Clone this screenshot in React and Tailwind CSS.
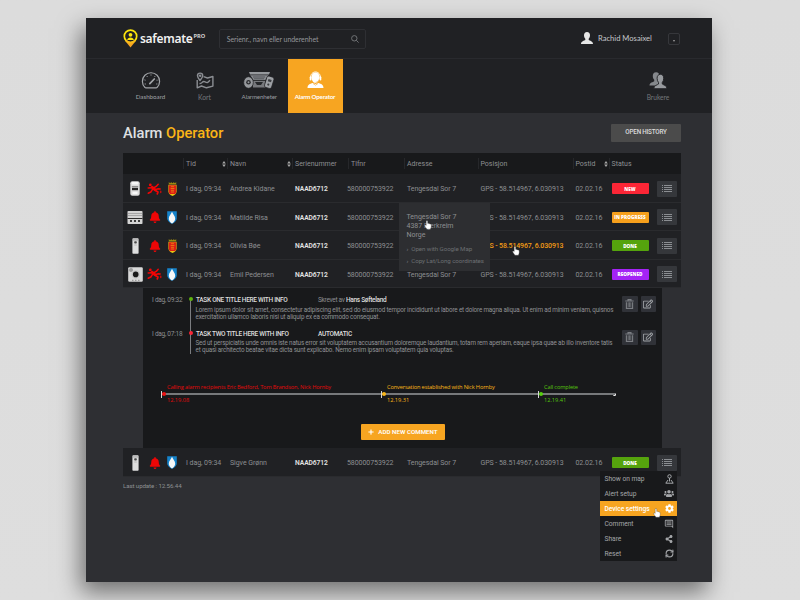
import React from "react";
import { FaBell, FaPlus, FaRegEdit, FaCog, FaShareAlt, FaUsers } from "react-icons/fa";
import { MdOutlineComment } from "react-icons/md";
import { RefreshCw } from "lucide-react";

const GRID =
  "grid grid-cols-[63px_44px_65px_52px_60px_73.5px_95px_36px_45.5px_24px] items-center";

const rows = [
  { device: "tracker", alarm: "fall", shield: "red", name: "Andrea Kidane", status: "NEW", color: "bg-[#fb2636]" },
  { device: "base", alarm: "bell", shield: "blue", name: "Matilde Risa", status: "IN PROGRESS", color: "bg-[#f7a01c]", covered: true },
  { device: "remote", alarm: "bell", shield: "red", name: "Olivia Bøe", status: "DONE", color: "bg-[#55a30d]", hot: true, covered: true },
  { device: "camera", alarm: "fall", shield: "blue", name: "Emil Pedersen", status: "REOPENED", color: "bg-[#a423f5]" },
];

const lastRow = { device: "remote", alarm: "bell", shield: "blue", name: "Sigve Grønn", status: "DONE", color: "bg-[#55a30d]" };

const Logo = () => (
  <div className="flex h-5 items-center">
    <svg width="15" height="19" viewBox="0 0 15 19">
      <path d="M7.5 18.6 2.700 12.500h9.600z" fill="#f7a521" />
      <circle cx="7.5" cy="7.3" r="6.2" fill="#202124" stroke="#fbe40c" strokeWidth="1.7" />
      <path d="M2.7 11.4a6.2 6.2 0 0 0 9.6 0" fill="none" stroke="#f9b91a" strokeWidth="1.7" />
      <circle cx="7.5" cy="5.8" r="1.9" fill="#fbe40c" />
      <path d="M4.2 11c0-3.400 6.600-3.400 6.600 0z" fill="#fbe40c" />
    </svg>
    <span className="mt-[2px] ml-[2px] font-['Noto_Sans'] text-[12px] leading-none font-semibold tracking-[-0.3px] text-[#f1f1f1]">
      safemate
    </span>
    <span className="mb-[3px] ml-[1px] font-['Noto_Sans'] text-[5.700px] leading-none font-bold text-[#d0d0d0]">PRO</span>
  </div>
);

const GaugeIcon = () => (
  <svg width="20" height="18" viewBox="0 0 20 18" fill="none" stroke="#a1a4a8" strokeLinecap="round">
    <path d="M4 16.500a8.600 8.600 0 1 1 12 0q-.3.4-.9.400H4.900q-.6 0-.9-.4z" strokeWidth="1.200" />
    <path d="M8.800 12.700 13.300 8" strokeWidth="1.700" />
    <path d="M10 3.800v.4M6 5.300l.3.400M14 5.300l-.2.300M3.800 9l.4.100M16.200 9.200h-.3M4 13h.5M15.600 13h.4" strokeWidth=".9" />
  </svg>
);

const MapIcon = () => (
  <svg width="18" height="17" viewBox="0 0 18 17" fill="none" stroke="#8b8e93" strokeWidth="1.400" strokeLinejoin="round">
    <path d="M4 8.500C2.200 6.200 1.500 5 1.500 3.700a2.600 2.600 0 0 1 5.200 0C6.700 5 5.800 6.200 4 8.500z" />
    <circle cx="4.100" cy="3.700" r=".6" />
    <path d="M1.200 8v7.800L5.500 14l5 1.800 6.400-1.700V4.500L11.500 6 7.600 4.700" />
    <path d="M3.500 11.500c3 .5 2.500-2.800 5-1.800s2.200 2 5.500-1.500" />
  </svg>
);

const DevicesIcon = () => (
  <svg width="32" height="18" viewBox="0 0 32 18">
    <path d="M6 1h21l-1 2.500H7z" fill="#96999d" />
    <path d="M7.200 4.200h18.200L22.500 9h-12z" fill="#84878b" />
    <path d="M10 6h12M11 7.800h10" stroke="#36383c" strokeWidth=".6" />
    <path d="M10 9.800h12v6.700H10z" fill="#77797d" />
    <path d="M12 11h8l-2 3h-4z" fill="#26282b" />
    <ellipse cx="5.500" cy="11.500" rx="4.800" ry="5.800" fill="#96999d" stroke="#202124" strokeWidth=".7" />
    <circle cx="5.500" cy="11.200" r="2.300" fill="#2a2b2e" />
    <circle cx="5.500" cy="11.200" r="1" fill="#96999d" />
    <rect x="22.600" y="5.300" width="7.400" height="11.800" rx="2" transform="rotate(17 26 11)" fill="#9da0a4" stroke="#202124" strokeWidth=".7" />
    <path d="m25.500 8 3.200 1-.7 2.300-3.200-1z" fill="#3a3c40" />
    <circle cx="25.300" cy="13.600" r="1.100" fill="#3a3c40" />
  </svg>
);

const OperatorIcon = () => (
  <svg width="17" height="18" viewBox="0 0 17 18">
    <path d="M3.600 7.500C2.900-1.200 14.100-1.200 13.400 7.500" fill="none" stroke="#fff" strokeWidth="1" />
    <path d="M4.500 5.800c0-5.800 8-5.800 8 0 0 3.200-1.300 6.200-4 6.200s-4-3-4-6.200z" fill="#fff" />
    <rect x="2.700" y="5.500" width="1.800" height="4" rx=".8" fill="#fff" />
    <rect x="12.500" y="5.500" width="1.800" height="4" rx=".8" fill="#fff" />
    <path d="M.5 17c0-3.600 3-4.200 5.300-4.900l2.700 1 2.700-1c2.300.7 5.300 1.300 5.300 4.900z" fill="#fff" />
    <path d="M12 8.500c-.3 2-1.400 2.700-3.400 2.800M6 12.500l2.500 1.700 2.500-1.700" fill="none" stroke="#f7a521" strokeWidth=".6" />
  </svg>
);

const PERSON = "M6 0c2 0 3 1.400 3 3.300 0 1.500-.5 2.700-1.300 3.500v1.300c1 .9 4.300 1 4.300 3.900H0c0-2.900 3.300-3 4.300-3.900V6.800C3.500 6 3 4.800 3 3.300 3 1.400 4 0 6 0z";

const PersonIcon = () => (
  <svg width="12" height="12" viewBox="0 0 12 12">
    <path d={PERSON} fill="#e6e6e6" />
  </svg>
);

const UsersIcon = () => (
  <svg width="18" height="17" viewBox="0 0 18 17">
    <path d={PERSON} transform="translate(.5 .3) scale(1.100)" fill="#85888c" />
    <path d={PERSON} transform="translate(4.800 2.300) scale(1.100 1.200)" fill="#979a9e" stroke="#202124" strokeWidth=".8" />
  </svg>
);

const DeviceIcon = ({ type }) => {
  if (type === "tracker")
    return (
      <svg width="10" height="15" viewBox="0 0 10 15">
        <rect x=".3" y=".3" width="9.400" height="14.400" rx="2" fill="#dcdcdc" />
        <rect x="1.800" y="1" width="6.400" height="2.500" rx="1" fill="#f6f6f6" />
        <path d="M1.800 5h6.400v1.200H1.800z" fill="#8d8d8d" />
        <path d="M2 6.800h6v2.400H2z" fill="#242424" />
        <path d="M2.500 10.700h5v2.500h-5z" fill="#f8f8f8" />
      </svg>
    );
  if (type === "base")
    return (
      <svg width="16" height="13" viewBox="0 0 16 13">
        <rect x=".5" y="0" width="15" height="13" rx=".8" fill="#d3d3d3" />
        <path d="M1 2.500h14M1 4.500h14" stroke="#9a9a9a" strokeWidth=".8" />
        <path d="M.5 7.500h15" stroke="#2b2b2b" strokeWidth="1" />
        <path d="M3 9h2v2H3zM7 9h2v2H7zM11 9h2v2h-2z" fill="#3c3c3c" />
      </svg>
    );
  if (type === "remote")
    return (
      <svg width="7" height="16" viewBox="0 0 7 16">
        <rect x=".4" y=".3" width="6.200" height="15.400" rx=".8" fill="#dedede" />
        <rect x="1" y="1" width="5" height="1.800" fill="#bbb" />
        <rect x="2.200" y="3.300" width="2.600" height="2.300" rx=".8" fill="#4a4a4a" />
        <path d="M2.200 7h2.600" stroke="#aaa" strokeWidth=".7" />
      </svg>
    );
  return (
    <svg width="15" height="15" viewBox="0 0 15 15">
      <rect x=".2" y=".2" width="14.600" height="14.600" rx="1.200" fill="#d9d9d9" />
      <circle cx="3" cy="3" r="2" fill="#9c9c9c" />
      <circle cx="7.700" cy="7.400" r="4.300" fill="#cacaca" />
      <circle cx="7.700" cy="7.400" r="2.800" fill="#1a1a1a" />
      <path d="M4 13.300h1.500M7 13.300h1.500M10 13.300h1.500" stroke="#777" strokeWidth=".8" />
    </svg>
  );
};

const FallIcon = () => (
  <svg width="15" height="12" viewBox="0 0 15 12" fill="none" stroke="#f30505" strokeLinecap="round" strokeLinejoin="round">
    <circle cx="3.300" cy="1.900" r="1.400" fill="#f30505" stroke="none" />
    <path d="M5.200 4.300 8 6.800" strokeWidth="2.800" />
    <path d="M5 4.800 1.200 5M6.500 5 9.200 3.400l2-2.200M5.500 6.300 3.800 9 1.200 10.200" strokeWidth="1.500" />
    <path d="m8 6.800 3.300-1 1.800.2M8 7.200l3 1.700-.7 2" strokeWidth="1.700" />
    <path d="M13.800 8v1.600" strokeWidth="1.100" />
  </svg>
);

const Shield = ({ type }) =>
  type === "red" ? (
    <svg width="9" height="14" viewBox="0 0 9 14">
      <path d="M.8 0 2 1.300 3.300.2l1.200 1.100L5.700.2 7 1.300 8.200 0v2.300H.8z" fill="#a08c10" />
      <path d="M.4 2.800h8.200v6.500c0 2.700-2 3.900-4.100 4.600C2.400 13.200.4 12 .4 9.300z" fill="#e8c412" />
      <path d="M.8 3.200h7.400v6.500c0 1-.4 1.800-1.300 2.300H2.100C1.200 11.500.8 10.700.8 9.700z" fill="#de1f14" />
      <path d="M3 4.700h3M2.700 6.500h3.700M3 8.300h3M3 10h3" stroke="#f5a712" strokeWidth=".6" />
    </svg>
  ) : (
    <svg width="10" height="13" viewBox="0 0 10 13">
      <path d="M.2.200h9.600v6.500C9.800 10 7.500 11.600 5 12.800 2.500 11.600.2 10 .2 6.700z" fill="#1583cb" />
      <path d="M5 .8C6 3.300 8.200 5.200 8.200 7.700 8.200 9.500 7 11.300 5 12.500 3 11.300 1.800 9.500 1.800 7.700 1.800 5.200 4 3.300 5 .8z" fill="#f7f7f7" />
    </svg>
  );

const ListIcon = () => (
  <svg width="10" height="7" viewBox="0 0 10 7" fill="#8b8e92" shapeRendering="crispEdges">
    <path d="M0 0h1v1H0zM0 2h1v1H0zM0 4h1v1H0zM0 6h1v1H0zM2 0h8v1H2zM2 2h8v1H2zM2 4h8v1H2zM2 6h8v1H2z" />
  </svg>
);

const TrashIcon = () => (
  <svg width="9" height="10" viewBox="0 0 9 10" fill="none" stroke="#7b7e83">
    <path d="M.3 2h8.400M3 1.800V.6h3v1.200" strokeWidth="1.100" />
    <path d="M1.400 3.300v6.100h6.200V3.300" strokeWidth="1.100" />
    <path d="M3.200 3.300V8M4.500 3.300V8M5.800 3.300V8" strokeWidth=".8" />
  </svg>
);

const MapPinIcon = () => (
  <svg width="9" height="10" viewBox="0 0 9 10" fill="none" stroke="#a5a8ab" strokeWidth="1">
    <circle cx="4.500" cy="2.400" r="1.700" />
    <path d="M4.500 4v3.500M3 6 .8 9.200h7.400L6 6" />
  </svg>
);

const Cursor = ({ className }) => (
  <svg width="8" height="10" viewBox="0 0 8 10" className={`absolute ${className}`}>
    <path
      d="M2.200 5.500V1.200c0-1.100 1.500-1.100 1.500 0v2.300c.4-.4 1.100-.2 1.200.3.4-.3 1-.1 1.100.4.500-.3 1.200 0 1.200.6v2c0 .9-.6 1.400-.7 2.400H2.800C2.500 8 .9 6.800.6 5.700c-.2-.8.900-1.100 1.600-.2z"
      fill="#fff"
      stroke="#333"
      strokeWidth=".3"
    />
  </svg>
);

const SortArrows = () => (
  <svg width="4" height="6" viewBox="0 0 4 6" fill="#a9a9a9">
    <path d="M2 0 3.800 2.500H.2zM2 6 .2 3.500h3.600z" />
  </svg>
);

const HeadCell = ({ children, sort, className = "" }) => (
  <div className={`-ml-[3px] flex h-[11px] items-center justify-between border-l border-[#26272a] pr-[4px] pl-[2px] ${className}`}>
    <span className="pt-[2px]">{children}</span>
    {sort && <SortArrows />}
  </div>
);

const Row = ({ row, children }) => (
  <div className={`${GRID} relative h-[28.500px] border-b border-[#2a2b2e] bg-[#202124] pt-[1.500px] text-[7px] leading-none tracking-[-0.06px] whitespace-nowrap text-[#8d8f92]`}>
    <div className="flex items-center pl-1">
      <div className="flex w-4 justify-center"><DeviceIcon type={row.device} /></div>
      <div className="ml-[3px] flex w-[17px] justify-center">
        {row.alarm === "bell" ? <FaBell size={12} color="#ee0606" /> : <FallIcon />}
      </div>
      <div className="ml-[4px] flex w-[10px] justify-center"><Shield type={row.shield} /></div>
    </div>
    <div className="pt-[2px]">I dag, 09:34</div>
    <div className="pt-[2px]">{row.name}</div>
    <div className="pt-[2px] text-[6.700px] font-semibold text-[#e3e3e3]">NAAD6712</div>
    <div className="pt-[2px]">580000753922</div>
    <div className="pt-[2px]">{!row.covered && "Tengesdal Sor 7"}</div>
    <div className={`pt-[2px] ${row.hot ? "font-medium tracking-[-0.13px] text-[#f39c16]" : ""}`}>GPS - 58.514967, 6.030913</div>
    <div className="pt-[2px]">02.02.16</div>
    <div className={`flex h-[11px] w-[37px] items-center justify-center rounded-[1px] pt-px font-['Open_Sans'] text-[4.700px] font-extrabold tracking-normal text-white ${row.color}`}>
      {row.status}
    </div>
    <div className="flex h-4 w-5 items-center justify-center rounded-[1px] bg-[#35373b]">
      <ListIcon />
    </div>
    {children}
  </div>
);

const ActionButtons = () => (
  <div className="flex gap-[3px]">
    <div className="flex size-[15.500px] items-center justify-center rounded-[1px] bg-[#303238]"><TrashIcon /></div>
    <div className="flex size-[15.500px] items-center justify-center rounded-[1px] bg-[#303238]"><FaRegEdit size={10} color="#a2a5a9" /></div>
  </div>
);

const Task = ({ time, dot, title, author, lines }) => (
  <div className="flex h-[33.500px]">
    <div className="w-[36px] shrink-0 pt-[5px] text-[6.500px] tracking-[-0.25px] whitespace-nowrap text-[#8d8f92]">{time}</div>
    <div className="relative w-[8px] shrink-0">
      <div className={`absolute top-[5px] left-[0.500px] size-1 rounded-full ${dot}`} />
    </div>
    <div className="w-[417px] shrink-0 pt-[5px] whitespace-nowrap">
      <div className="flex text-[6.500px] tracking-[-0.3px] text-[#dedede]">
        <span className="w-[122px] font-medium">{title}</span>
        <span>{author}</span>
      </div>
      <div className="mt-[3px] -ml-[0.500px] text-[6.300px] leading-[7px] tracking-[-0.16px] text-[#909295]">
        {lines.map((line) => (
          <div key={line}>{line}</div>
        ))}
      </div>
    </div>
    <div className="ml-[9px] pt-[4px]"><ActionButtons /></div>
  </div>
);

const CallStep = ({ width, text, time, color, dot }) => (
  <div className={`relative ${width} ${color}`}>
    <div className="pl-[6px]">{text}</div>
    <div className="mt-[3px] h-[2px] bg-[#77797b]" />
    <div className="absolute top-[7px] left-0 h-[7px] w-px bg-[#d5d5d5]" />
    <div className={`absolute top-[8px] left-[1px] size-1 rounded-full ${dot}`} />
    <div className="mt-[2px] pl-[6px] tracking-[-0.050px]">{time}</div>
  </div>
);

const Details = () => (
  <div className="ml-5 h-[160px] w-[519px] bg-[#18191b] pt-[4px] pl-[9px] leading-none">
    <div className="relative">
      <div className="absolute top-[7px] left-[38px] h-[55px] w-px bg-[#7b7d80]" />
      <Task
        time="I dag, 09:32"
        dot="bg-[#5fb30d]"
        title="TASK ONE TITLE HERE WITH INFO"
        author={<><span className="text-[#8d8f92]">Skrevet av</span> <b className="font-medium">Hans Søfteland</b></>}
        lines={[
          "Lorem ipsum dolor sit amet, consectetur adipiscing elit, sed do eiusmod tempor incididunt ut labore et dolore magna aliqua. Ut enim ad minim veniam, quisnos",
          "exercitation ullamco laboris nisi ut aliquip ex ea commodo consequat.",
        ]}
      />
      <Task
        time="I dag, 07:18"
        dot="bg-[#fb2636]"
        title="TASK TWO TITLE HERE WITH INFO"
        author={<b className="font-medium">AUTOMATIC</b>}
        lines={[
          "Sed ut perspiciatis unde omnis iste natus error sit voluptatem accusantium doloremque laudantium, totam rem aperiam, eaque ipsa quae ab illo inventore tatis",
          "et quasi architecto beatae vitae dicta sunt explicabo. Nemo enim ipsam voluptatem quia voluptas.",
        ]}
      />
    </div>
    <div className="mt-[25px] ml-[9px] flex font-['Open_Sans'] text-[5.700px] leading-[6px] tracking-[-0.15px] whitespace-nowrap">
      <CallStep width="w-[220px]" color="text-[#e00a0a]" dot="bg-[#f01010]" text="Calling alarm recipients Eric Bedford, Tom Brandson, Nick Hornby" time="12.19.08" />
      <CallStep width="w-[157px]" color="text-[#f9b618]" dot="bg-[#f9b618]" text="Conversation established with Nick Hornby" time="12.19.31" />
      <CallStep width="w-[77px]" color="text-[#56c40e]" dot="bg-[#56d00e]" text="Call complete" time="12.19.41" />
      <div className="mt-[8.500px] -ml-[2px] size-[3px] rounded-full bg-white" />
    </div>
    <div className="mt-[21px] ml-[209px] flex h-[16px] w-[84px] items-center justify-center gap-1 rounded-[1px] bg-[#f7a521] text-[6.200px] font-semibold text-white">
      <FaPlus size={6} />
      <span className="pt-px">ADD NEW COMMENT</span>
    </div>
  </div>
);

const menu = [
  { label: "Show on map", icon: <MapPinIcon /> },
  { label: "Alert setup", icon: <FaUsers size={11} /> },
  { label: "Device settings", icon: <FaCog size={9} />, active: true },
  { label: "Comment", icon: <MdOutlineComment size={12} /> },
  { label: "Share", icon: <FaShareAlt size={8} /> },
  { label: "Reset", icon: <RefreshCw size={9} strokeWidth={3} /> },
];

const ActionMenu = () => (
  <div className="absolute top-[23px] left-[477px] w-[77px] bg-[#18191b] text-[6.700px] tracking-[-0.050px] text-[#a3a5a8]">
    {menu.map((item) => (
      <div key={item.label} className={`flex h-[15px] items-center justify-between pr-[3px] pl-[4.500px] ${item.active ? "bg-[#f7a521] font-medium text-white" : ""}`}>
        <span className="pt-[2px]">{item.label}</span>
        <span className="flex w-[10px] justify-center">{item.icon}</span>
      </div>
    ))}
    <Cursor className="top-[37px] left-[53px]" />
  </div>
);

const AddressCard = () => (
  <div className="absolute top-0 left-[275.500px] h-[68px] w-[91px] bg-[#2d2e31] pt-[10px] pl-[8px] text-[7px] leading-[9px] whitespace-nowrap text-[#8d8f92]">
    <div>Tengesdal Sor 7</div>
    <div>4387 Bjerkreim</div>
    <div>Norge</div>
    <div className="mt-[3px] text-[6.200px] leading-3 tracking-[-0.080px] text-[#6c6e71]">
      <div><span className="mr-[3px] font-bold">&rsaquo;</span>Open with Google Map</div>
      <div><span className="mr-[3px] font-bold">&rsaquo;</span>Copy Lat/Long coordinates</div>
    </div>
    <Cursor className="top-[17px] left-[25px]" />
  </div>
);

const NavItem = ({ icon, label, className }) => (
  <div className={`flex h-[54px] flex-col items-center pt-[12px] font-['Lato'] leading-none whitespace-nowrap ${className}`}>
    <div className="flex h-[18px] items-center">{icon}</div>
    <div className="mt-[5px]">{label}</div>
  </div>
);

const App = () => {
  return (
    <div className="h-[600px] w-[800px] overflow-hidden bg-linear-to-b from-[#dcdcdc] to-[#dedede] pt-[18px] pl-[86px] font-['Roboto',sans-serif]">
      <div className="h-[564px] w-[626px] bg-[#2e2f33] shadow-[-5px_10px_22px_rgba(0,0,0,0.5)]">
        {/* Top bar */}
        <div className="flex h-[41px] items-center border-b border-[#292a2e] bg-[#202124] pl-[37px]">
          <Logo />
          <div className="mt-[2px] ml-[13.500px] flex h-5 w-[147px] items-center justify-between rounded-[2px] border border-[#2e2f33] pr-[6px] pl-[7px] font-['Lato'] text-[7px] tracking-[-0.060px] text-[#94969a]">
            <span>Serienr., navn eller underenhet</span>
            <svg width="8" height="8" viewBox="0 0 8 8" fill="none" stroke="#77797d" strokeWidth=".9">
              <circle cx="3.300" cy="3.300" r="2.700" />
              <path d="m5.300 5.300 2.300 2.300" />
            </svg>
          </div>
          <div className="mr-[32px] ml-auto flex items-center">
            <PersonIcon />
            <span className="ml-[5px] w-[70px] pt-px font-['Lato'] text-[7.600px] leading-none text-[#c6c8cb]">Rachid Mosaixel</span>
            <div className="mt-px flex size-3 items-end justify-center rounded-[2px] border border-[#36373b] pb-[2px]">
              <div className="size-0 border-x-[1.500px] border-t-[2px] border-x-transparent border-t-[#a0a0a0]" />
            </div>
          </div>
        </div>

        {/* Navigation */}
        <div className="flex h-[54px] bg-[#202124] pl-[37px]">
          <NavItem className="w-[55px] text-[6.200px] text-[#a1a4a8]" icon={<GaugeIcon />} label="Dashboard" />
          <NavItem className="w-[53px] text-[6.800px] text-[#74777c]" icon={<MapIcon />} label="Kort" />
          <NavItem className="w-[56.500px] text-[6.200px] tracking-[-0.160px] text-[#9a9da1]" icon={<DevicesIcon />} label="Alarmenheter" />
          <NavItem className="w-[55px] bg-[#f7a521] text-[6.200px] font-bold tracking-[-0.200px] text-white" icon={<OperatorIcon />} label="Alarm Operator" />
          <NavItem className="mr-[27px] ml-auto w-[54px] text-[6.600px] text-[#74777b]" icon={<UsersIcon />} label="Brukere" />
        </div>

        <div className="flex h-[40px] items-center justify-between pr-[31px] pl-[37px]">
          <h1 className="text-[14.700px] leading-none font-medium text-[#dfe0e2]">
            Alarm <span className="text-[#fbb516]">Operator</span>
          </h1>
          <div className="-mt-px flex h-[18px] w-[70px] items-center justify-center rounded-[1px] bg-[#4b4b4b] pt-px text-[6.300px] font-medium tracking-[-0.200px] text-[#dcdcdc]">
            OPEN HISTORY
          </div>
        </div>

        <div className="ml-[37px] w-[558px]">
          <div className={`${GRID} h-[21px] bg-[#18191b] text-[7px] leading-none text-[#8d8f92]`}>
            <div />
            <HeadCell sort>Tid</HeadCell>
            <HeadCell sort>Navn</HeadCell>
            <HeadCell>Serienummer</HeadCell>
            <HeadCell className="ml-px">Tlfnr</HeadCell>
            <HeadCell>Adresse</HeadCell>
            <HeadCell>Posisjon</HeadCell>
            <HeadCell sort>Postid</HeadCell>
            <HeadCell>Status</HeadCell>
          </div>
          {rows.map((row) => (
            <Row key={row.name} row={row}>
              {row.hot && <Cursor className="top-[15px] left-[389px]" />}
            </Row>
          ))}
          <Details />
          <Row row={lastRow}>
            <ActionMenu />
          </Row>
        </div>
        <div className="mt-[6px] ml-[37px] text-[6.200px] leading-none tracking-[-0.120px] text-[#8d8f92]">Last update : 12.56.44</div>

        <div className="absolute top-[203px] left-[123px]">
          <AddressCard />
        </div>
      </div>
    </div>
  );
};

export default App;
